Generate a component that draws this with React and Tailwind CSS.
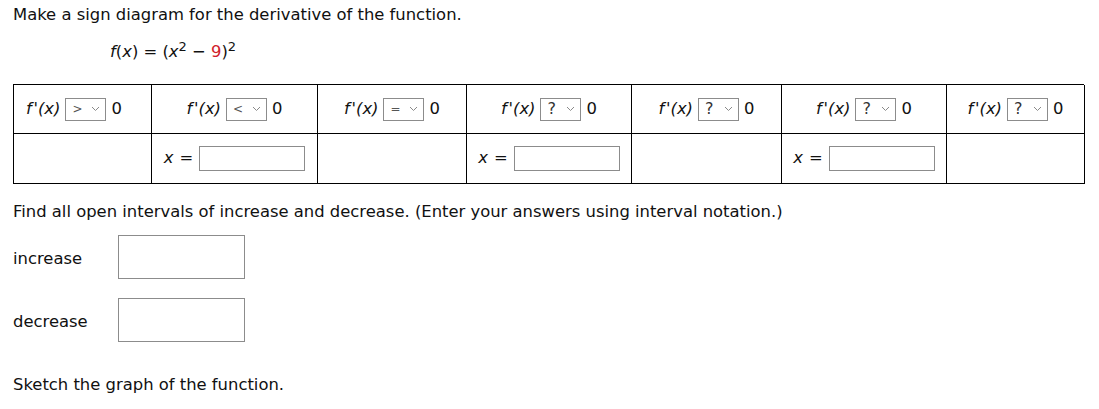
import React from 'react';

const COLS = [
  { sel: '>', left: true },
  { sel: '<', x: true },
  { sel: '=' },
  { sel: '?', x: true },
  { sel: '?' },
  { sel: '?', x: true },
  { sel: '?' },
];

function Chevron() {
  return (
    <svg width="9" height="6" viewBox="0 0 9 6" className="ml-auto">
      <path d="M1 1 L4.5 4.5 L8 1" fill="none" stroke="#8a8a8a" strokeWidth="1" />
    </svg>
  );
}

function Select({ value }) {
  return (
    <span className="mx-[5px] inline-flex h-[23px] w-[41px] items-center border border-[#8c8c8c] bg-white pl-[6px] pr-[5px]">
      <span className={value === '?' ? 'text-[16px] text-[#333]' : 'text-[12px] text-[#555]'}>{value}</span>
      <Chevron />
    </span>
  );
}

function Fprime() {
  return (
    <span className="italic">
      f<span className="not-italic">&#8202;'</span>(x)
    </span>
  );
}

export default function App() {
  return (
    <div className="min-h-[409px] bg-white pl-[13px] pt-[4px] text-[16.4px] text-[#111] [font-family:'DejaVu_Sans',Verdana,sans-serif]">
      <p className="h-[22px] leading-[22px]">Make a sign diagram for the derivative of the function.</p>

      <p className="mt-[15px] h-[22px] pl-[97px] leading-[22px]">
        <span className="italic">f</span>(<span className="italic">x</span>) = (<span className="italic">x</span>
        <sup className="text-[13px]">2</sup> &minus; <span className="text-[#d0202a]">9</span>)<sup className="text-[13px]">2</sup>
      </p>

      <div className="mt-[21px] grid w-[1071px] grid-cols-[138px_166px_149px_165px_150px_165px_138px] border-l border-t border-black">
        {COLS.map((c, i) => (
          <div
            key={'t' + i}
            className={
              'flex h-[49px] items-center border-b border-r border-black ' +
              (c.left ? 'justify-start pl-[12px]' : 'justify-center')
            }
          >
            <Fprime />
            <Select value={c.sel} />
            <span>0</span>
          </div>
        ))}
        {COLS.map((c, i) => (
          <div key={'b' + i} className="flex h-[50px] items-center justify-center border-b border-r border-black">
            {c.x && (
              <>
                <span className="italic">x</span>
                <span className="ml-[6px]">=</span>
                <span className="ml-[6px] h-[25px] w-[106px] border border-[#8c8c8c] bg-white" />
              </>
            )}
          </div>
        ))}
      </div>

      <p className="mt-[17px] h-[22px] leading-[22px]">
        Find all open intervals of increase and decrease. (Enter your answers using interval notation.)
      </p>

      <div className="mt-[12px] flex h-[44px] items-center">
        <span className="w-[105px] pt-[4px]">increase</span>
        <span className="h-[44px] w-[127px] border border-[#8c8c8c] bg-white" />
      </div>
      <div className="mt-[19px] flex h-[44px] items-center">
        <span className="w-[105px] pt-[4px]">decrease</span>
        <span className="h-[44px] w-[127px] border border-[#8c8c8c] bg-white" />
      </div>

      <p className="mt-[32px] h-[22px] leading-[22px]">Sketch the graph of the function.</p>
    </div>
  );
}
